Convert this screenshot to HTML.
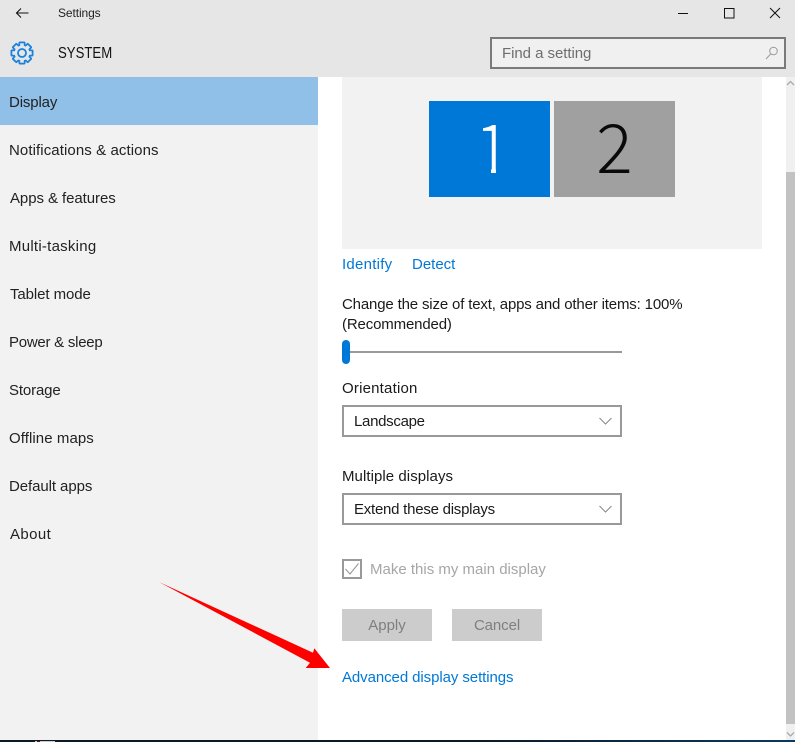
<!DOCTYPE html>
<html>
<head>
<meta charset="utf-8">
<style>
html,body{margin:0;padding:0;background:#fff}
body{width:795px;height:742px;position:relative;overflow:hidden;font-family:"Liberation Sans",sans-serif;font-size:15px;color:#1a1a1a}
div,a,svg{position:absolute}
.t{white-space:nowrap;line-height:20px}
.nav{left:9px;white-space:nowrap;line-height:20px;color:#222}
.link{color:#0078d7;white-space:nowrap;line-height:20px}
.sel{left:342px;width:276px;height:28px;border:2px solid #999;background:#fff}
.btn{top:609px;width:90px;height:32px;background:#ccc;color:#7f7f7f;text-align:center;line-height:34px}
.num{top:101px;width:121px;height:96px;box-sizing:border-box;text-align:center;font-family:"Noto Sans CJK JP","Liberation Sans",sans-serif;font-weight:300;font-size:68px;line-height:86px}
</style>
</head>
<body>
<div style="left:0;top:0;width:795px;height:77px;background:#e6e6e6"></div>
<svg style="left:15px;top:6px" width="15" height="14" viewBox="0 0 15 14"><path d="M1.500 7H13.500M6 2.500L1.500 7 6 11.500" fill="none" stroke="#111" stroke-width="1.100"/></svg>
<div class="t" style="left:58px;top:3px;font-size:12px;color:#222;letter-spacing:-.1px">Settings</div>
<svg style="left:10px;top:41px" width="24" height="24" viewBox="0 0 24 24">
<g fill="#1a82dc">
<circle cx="12" cy="12" r="9.300"/>
<rect x="8.500" y=".5" width="7" height="23" rx="1.500"/>
<rect x="8.500" y=".5" width="7" height="23" rx="1.500" transform="rotate(45 12 12)"/>
<rect x="8.500" y=".5" width="7" height="23" rx="1.500" transform="rotate(90 12 12)"/>
<rect x="8.500" y=".5" width="7" height="23" rx="1.500" transform="rotate(135 12 12)"/>
</g>
<g fill="#e6e6e6">
<circle cx="12" cy="12" r="7.400"/>
<rect x="10.200" y="2.300" width="3.600" height="19.400"/>
<rect x="10.200" y="2.300" width="3.600" height="19.400" transform="rotate(45 12 12)"/>
<rect x="10.200" y="2.300" width="3.600" height="19.400" transform="rotate(90 12 12)"/>
<rect x="10.200" y="2.300" width="3.600" height="19.400" transform="rotate(135 12 12)"/>
</g>
<circle cx="12" cy="12" r="4" fill="none" stroke="#1a82dc" stroke-width="1.800"/>
</svg>
<div class="t" style="left:58px;top:44px;font-size:15.500px;color:#111;transform:scaleX(.85);transform-origin:0 0">SYSTEM</div>

<svg style="left:678px;top:6px" width="110" height="16" viewBox="0 0 110 16"><path d="M0 7.500H10" stroke="#111" stroke-width="1"/><rect x="46.500" y="2.500" width="9.500" height="9.500" fill="none" stroke="#111" stroke-width="1"/><path d="M92 2L102 12M102 2L92 12" stroke="#111" stroke-width="1"/></svg>

<div style="left:490px;top:37px;width:292px;height:28px;border:2px solid #7a7a7a;background:#f0f0f0"></div>
<div class="t" style="left:502px;top:44px;color:#6e6e6e;letter-spacing:-.05px">Find a setting</div>
<svg style="left:765px;top:46px" width="14" height="14" viewBox="0 0 14 14"><circle cx="8.500" cy="5" r="3.800" fill="none" stroke="#999" stroke-width="1"/><path d="M5.800 7.800L1 13" stroke="#999" stroke-width="1"/></svg>

<div style="left:0;top:77px;width:318px;height:665px;background:#f2f2f2"></div>
<div style="left:0;top:77px;width:318px;height:48px;background:#90bfe8"></div>
<div class="nav" style="top:93px;letter-spacing:-.14px">Display</div>
<div class="nav" style="top:141px;letter-spacing:.09px">Notifications &amp; actions</div>
<div class="nav" style="top:189px;left:10px;letter-spacing:-.07px">Apps &amp; features</div>
<div class="nav" style="top:237px;letter-spacing:.25px">Multi-tasking</div>
<div class="nav" style="top:285px;left:10px;letter-spacing:-.09px">Tablet mode</div>
<div class="nav" style="top:333px;letter-spacing:-.25px">Power &amp; sleep</div>
<div class="nav" style="top:381px;letter-spacing:-.14px">Storage</div>
<div class="nav" style="top:429px;letter-spacing:.08px">Offline maps</div>
<div class="nav" style="top:477px;letter-spacing:-.08px">Default apps</div>
<div class="nav" style="top:525px;left:10px;letter-spacing:.4px">About</div>

<div style="left:342px;top:77px;width:420px;height:172px;background:#f2f2f2"></div>
<div class="num" style="left:429px;background:#0078d7;color:#fff;padding-left:6px">1</div>
<div style="left:465px;top:167px;width:25.500px;height:12px;background:#0078d7"></div>
<div style="left:495.500px;top:167px;width:20px;height:12px;background:#0078d7"></div>
<div style="left:465px;top:174px;width:50px;height:5px;background:#0078d7"></div>
<div class="num" style="left:554px;background:#a0a0a0;color:#0a0a0a">2</div>

<div class="link" style="left:342px;top:255px;letter-spacing:.25px">Identify</div>
<div class="link" style="left:412px;top:255px">Detect</div>

<div class="t" style="left:342px;top:295px;letter-spacing:-.16px">Change the size of text, apps and other items: 100%</div>
<div class="t" style="left:342px;top:315px;letter-spacing:-.15px">(Recommended)</div>
<div style="left:342px;top:351px;width:280px;height:2px;background:#999"></div>
<div style="left:342px;top:340px;width:8px;height:24px;background:#0078d7;border-radius:4px"></div>

<div class="t" style="left:342px;top:379px;letter-spacing:.2px">Orientation</div>
<div class="sel" style="top:405px"></div>
<div class="t" style="left:354px;top:412px;letter-spacing:-.3px">Landscape</div>
<svg style="left:599px;top:417px" width="13" height="8" viewBox="0 0 13 8"><path d="M.5 1L6.500 7 12.500 1" fill="none" stroke="#888" stroke-width="1"/></svg>

<div class="t" style="left:342px;top:467px;letter-spacing:.06px">Multiple displays</div>
<div class="sel" style="top:493px"></div>
<div class="t" style="left:354px;top:500px;letter-spacing:-.24px">Extend these displays</div>
<svg style="left:599px;top:505px" width="13" height="8" viewBox="0 0 13 8"><path d="M.5 1L6.500 7 12.500 1" fill="none" stroke="#888" stroke-width="1"/></svg>

<div style="left:342px;top:559px;width:16px;height:16px;border:2px solid #999"></div>
<svg style="left:344px;top:561px" width="16" height="16" viewBox="0 0 16 16"><path d="M1.500 8L6 13 14.500 2.500" fill="none" stroke="#999" stroke-width="1.100"/></svg>
<div class="t" style="left:370px;top:560px;color:#a6a6a6">Make this my main display</div>

<div class="btn" style="left:342px">Apply</div>
<div class="btn" style="left:452px;letter-spacing:-.1px">Cancel</div>

<div class="link" style="left:342px;top:668px;letter-spacing:-.08px">Advanced display settings</div>

<div style="left:786px;top:77px;width:9px;height:663px;background:#f0f0f0"></div>
<div style="left:786px;top:172px;width:9px;height:552px;background:#c2c2c2"></div>
<svg style="left:786px;top:80px" width="9" height="7" viewBox="0 0 9 7"><path d="M1 5L4.500 1.500 8 5" fill="none" stroke="#aaa" stroke-width="1.300"/></svg>
<svg style="left:786px;top:731px" width="9" height="7" viewBox="0 0 9 7"><path d="M1 1.500L4.500 5 8 1.500" fill="none" stroke="#aaa" stroke-width="1.300"/></svg>

<div style="left:0;top:740px;width:795px;height:2px;background:linear-gradient(90deg,#0c1a26 0,#0c1a26 60%,#0a3a60 100%)"></div>
<div style="left:35px;top:741px;width:20px;height:1px;background:#ccc"></div>
<div style="left:37px;top:741px;width:3px;height:1px;background:#800"></div>

<svg style="left:0;top:0" width="795" height="742" viewBox="0 0 795 742"><polygon points="159,582 313,652.700 314.300,648.300 330,668 305.700,668 310,662.700" fill="#ff0000"/></svg>
</body>
</html>
